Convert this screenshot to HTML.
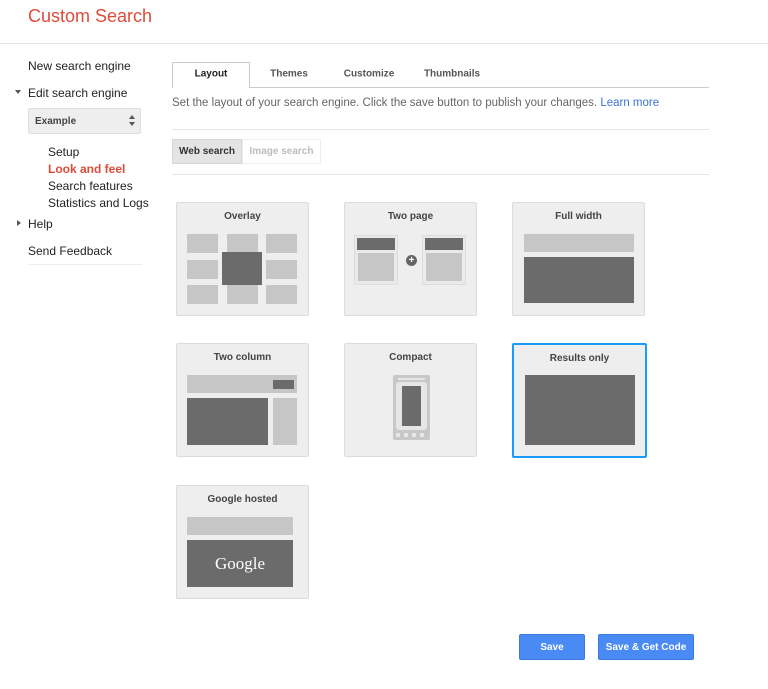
<!DOCTYPE html>
<html><head><meta charset="utf-8"><style>
*{margin:0;padding:0;box-sizing:border-box}
body{width:768px;height:689px;background:#fff;font-family:"Liberation Sans",Arial,sans-serif;position:relative;overflow:hidden;color:#222}
.a{position:absolute}
.t{font-size:12px;color:#222;white-space:nowrap}
.card{position:absolute;width:133px;height:114px;background:#eee;border:1px solid #dcdcdc;border-radius:2px}
.card .h{position:absolute;left:0;right:0;top:8px;text-align:center;font-size:10px;font-weight:bold;color:#444}
.l{position:absolute;background:#c6c6c6}
.d{position:absolute;background:#6b6b6b}
.tab{position:absolute;top:74px;font-size:10px;font-weight:bold;color:#555;transform:translate(-50%,-50%)}
.btn{position:absolute;background:#4a8af4;border:1px solid #3b7be0;border-radius:2px;color:#fff;font-size:10px;font-weight:bold;text-align:center;line-height:26px;height:26px}
</style></head><body>
<div class="a" style="left:28px;top:6px;font-size:18px;color:#dd4b39">Custom Search</div>
<div class="a" style="left:0;top:43px;width:768px;height:1px;background:#e5e5e5"></div>

<div class="a t" style="left:28px;top:59px">New search engine</div>
<div class="a" style="left:15px;top:90px;border-left:3px solid transparent;border-right:3px solid transparent;border-top:4px solid #555"></div>
<div class="a t" style="left:28px;top:86px">Edit search engine</div>
<div class="a" style="left:28px;top:108px;width:113px;height:26px;background:#eee;border:1px solid #ddd;border-radius:2px;font-size:10px;font-weight:bold;color:#444;line-height:26px;padding-left:6px">Example
<span style="position:absolute;right:5px;top:6px;border-left:3px solid transparent;border-right:3px solid transparent;border-bottom:4px solid #555"></span>
<span style="position:absolute;right:5px;top:13px;border-left:3px solid transparent;border-right:3px solid transparent;border-top:4px solid #555"></span></div>
<div class="a t" style="left:48px;top:145px">Setup</div>
<div class="a t" style="left:48px;top:162px;color:#dd4b39;font-weight:bold">Look and feel</div>
<div class="a t" style="left:48px;top:179px">Search features</div>
<div class="a t" style="left:48px;top:196px">Statistics and Logs</div>
<div class="a" style="left:17px;top:220px;border-top:3px solid transparent;border-bottom:3px solid transparent;border-left:4px solid #555"></div>
<div class="a t" style="left:28px;top:217px">Help</div>
<div class="a t" style="left:28px;top:244px">Send Feedback</div>
<div class="a" style="left:28px;top:264px;width:114px;height:1px;background:#eee"></div>

<div class="a" style="left:172px;top:87px;width:537px;height:1px;background:#ccc"></div>
<div class="a" style="left:172px;top:62px;width:78px;height:26px;border:1px solid #ccc;border-bottom:none;background:#fff"></div>
<div class="tab" style="left:211px;color:#222">Layout</div>
<div class="tab" style="left:289px">Themes</div>
<div class="tab" style="left:369px">Customize</div>
<div class="tab" style="left:452px">Thumbnails</div>
<div class="a" style="left:172px;top:97px;font-size:11.5px;color:#666;white-space:nowrap">Set the layout of your search engine. Click the save button to publish your changes. <span style="color:#3a6fd8">Learn more</span></div>
<div class="a" style="left:172px;top:129px;width:537px;height:1px;background:#e5e5e5"></div>
<div class="a" style="left:172px;top:139px;width:70px;height:25px;background:#e4e4e4;border:1px solid #d6d6d6;font-size:10px;font-weight:bold;color:#333;text-align:center;line-height:24px">Web search</div>
<div class="a" style="left:242px;top:139px;width:79px;height:25px;border:1px solid #eee;font-size:10px;font-weight:bold;color:#bbb;text-align:center;line-height:24px">Image search</div>
<div class="a" style="left:172px;top:174px;width:537px;height:1px;background:#e5e5e5"></div>

<div class="card" style="left:176px;top:202px"><div class="h">Overlay</div>
<div class="l" style="left:10px;top:31px;width:31px;height:19px"></div>
<div class="l" style="left:50px;top:31px;width:31px;height:19px"></div>
<div class="l" style="left:89px;top:31px;width:31px;height:19px"></div>
<div class="l" style="left:10px;top:57px;width:31px;height:19px"></div>
<div class="l" style="left:89px;top:57px;width:31px;height:19px"></div>
<div class="l" style="left:10px;top:82px;width:31px;height:19px"></div>
<div class="l" style="left:50px;top:82px;width:31px;height:19px"></div>
<div class="l" style="left:89px;top:82px;width:31px;height:19px"></div>
<div class="d" style="left:45px;top:49px;width:40px;height:33px"></div>
</div>
<div class="card" style="left:344px;top:202px"><div class="h">Two page</div>
<div class="a" style="left:9px;top:32px;width:44px;height:50px;border:1px solid #ddd;background:#eaeaea"></div>
<div class="d" style="left:12px;top:35px;width:38px;height:12px"></div>
<div class="l" style="left:13px;top:50px;width:36px;height:28px"></div>
<div class="a" style="left:61px;top:52px;width:11px;height:11px;border-radius:50%;background:#666;color:#fff;font-size:10px;font-weight:bold;line-height:11px;text-align:center">+</div>
<div class="a" style="left:77px;top:32px;width:44px;height:50px;border:1px solid #ddd;background:#eaeaea"></div>
<div class="d" style="left:80px;top:35px;width:38px;height:12px"></div>
<div class="l" style="left:81px;top:50px;width:36px;height:28px"></div>
</div>
<div class="card" style="left:512px;top:202px"><div class="h">Full width</div>
<div class="l" style="left:11px;top:31px;width:110px;height:18px"></div>
<div class="d" style="left:11px;top:54px;width:110px;height:46px"></div>
</div>
<div class="card" style="left:176px;top:343px"><div class="h">Two column</div>
<div class="l" style="left:10px;top:31px;width:110px;height:18px"></div>
<div class="d" style="left:96px;top:36px;width:21px;height:9px"></div>
<div class="d" style="left:10px;top:54px;width:81px;height:47px"></div>
<div class="l" style="left:96px;top:54px;width:24px;height:47px"></div>
</div>
<div class="card" style="left:344px;top:343px"><div class="h">Compact</div>
<div class="a" style="left:48px;top:31px;width:37px;height:65px;background:#c8c8c8;border-radius:2px"></div>
<div class="a" style="left:53px;top:34px;width:27px;height:2px;background:#e6e6e6"></div>
<div class="a" style="left:51px;top:38px;width:31px;height:48px;background:#e6e6e6;border-radius:3px"></div>
<div class="d" style="left:57px;top:42px;width:19px;height:40px"></div>
<div class="a" style="left:51px;top:89px;width:4px;height:4px;background:#e6e6e6"></div>
<div class="a" style="left:59px;top:89px;width:4px;height:4px;background:#e6e6e6"></div>
<div class="a" style="left:67px;top:89px;width:4px;height:4px;background:#e6e6e6"></div>
<div class="a" style="left:75px;top:89px;width:4px;height:4px;background:#e6e6e6"></div>
</div>
<div class="card" style="left:512px;top:343px;width:135px;height:115px;border:2px solid #1a9bfc"><div class="h" style="top:8px">Results only</div>
<div class="d" style="left:11px;top:30px;width:110px;height:70px"></div>
</div>
<div class="card" style="left:176px;top:485px"><div class="h">Google hosted</div>
<div class="l" style="left:10px;top:31px;width:106px;height:18px"></div>
<div class="d" style="left:10px;top:54px;width:106px;height:47px;color:#fff;font-family:'Liberation Serif',serif;font-size:17px;text-align:center;line-height:47px">Google</div>
</div>

<div class="btn" style="left:519px;top:634px;width:66px">Save</div>
<div class="btn" style="left:598px;top:634px;width:96px">Save &amp; Get Code</div>
</body></html>
